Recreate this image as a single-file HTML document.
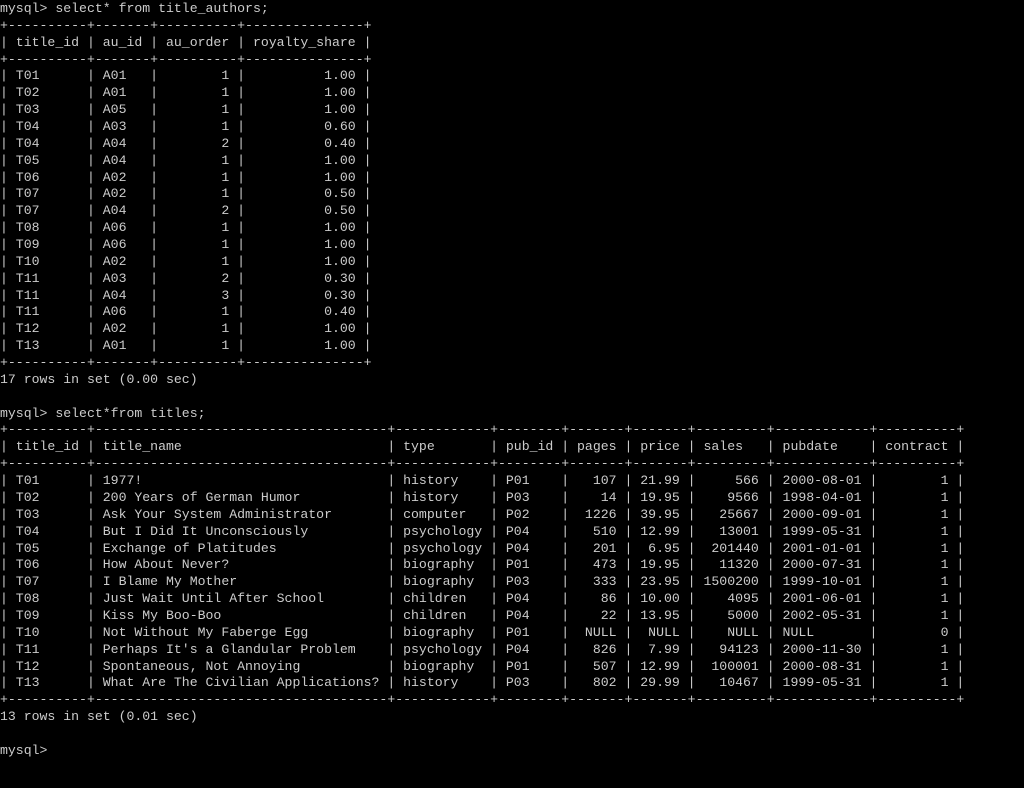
<!DOCTYPE html>
<html><head><meta charset="utf-8"><style>
html,body{margin:0;padding:0;background:#000;width:1024px;height:788px;overflow:hidden}
pre{margin:0;position:absolute;left:0;top:1px;font-family:"Liberation Mono",monospace;font-size:13.18px;line-height:16.86px;color:#cccccc;white-space:pre}
</style></head><body><pre>mysql&gt; select* from title_authors;
+----------+-------+----------+---------------+
| title_id | au_id | au_order | royalty_share |
+----------+-------+----------+---------------+
| T01      | A01   |        1 |          1.00 |
| T02      | A01   |        1 |          1.00 |
| T03      | A05   |        1 |          1.00 |
| T04      | A03   |        1 |          0.60 |
| T04      | A04   |        2 |          0.40 |
| T05      | A04   |        1 |          1.00 |
| T06      | A02   |        1 |          1.00 |
| T07      | A02   |        1 |          0.50 |
| T07      | A04   |        2 |          0.50 |
| T08      | A06   |        1 |          1.00 |
| T09      | A06   |        1 |          1.00 |
| T10      | A02   |        1 |          1.00 |
| T11      | A03   |        2 |          0.30 |
| T11      | A04   |        3 |          0.30 |
| T11      | A06   |        1 |          0.40 |
| T12      | A02   |        1 |          1.00 |
| T13      | A01   |        1 |          1.00 |
+----------+-------+----------+---------------+
17 rows in set (0.00 sec)

mysql&gt; select*from titles;
+----------+-------------------------------------+------------+--------+-------+-------+---------+------------+----------+
| title_id | title_name                          | type       | pub_id | pages | price | sales   | pubdate    | contract |
+----------+-------------------------------------+------------+--------+-------+-------+---------+------------+----------+
| T01      | 1977!                               | history    | P01    |   107 | 21.99 |     566 | 2000-08-01 |        1 |
| T02      | 200 Years of German Humor           | history    | P03    |    14 | 19.95 |    9566 | 1998-04-01 |        1 |
| T03      | Ask Your System Administrator       | computer   | P02    |  1226 | 39.95 |   25667 | 2000-09-01 |        1 |
| T04      | But I Did It Unconsciously          | psychology | P04    |   510 | 12.99 |   13001 | 1999-05-31 |        1 |
| T05      | Exchange of Platitudes              | psychology | P04    |   201 |  6.95 |  201440 | 2001-01-01 |        1 |
| T06      | How About Never?                    | biography  | P01    |   473 | 19.95 |   11320 | 2000-07-31 |        1 |
| T07      | I Blame My Mother                   | biography  | P03    |   333 | 23.95 | 1500200 | 1999-10-01 |        1 |
| T08      | Just Wait Until After School        | children   | P04    |    86 | 10.00 |    4095 | 2001-06-01 |        1 |
| T09      | Kiss My Boo-Boo                     | children   | P04    |    22 | 13.95 |    5000 | 2002-05-31 |        1 |
| T10      | Not Without My Faberge Egg          | biography  | P01    |  NULL |  NULL |    NULL | NULL       |        0 |
| T11      | Perhaps It's a Glandular Problem    | psychology | P04    |   826 |  7.99 |   94123 | 2000-11-30 |        1 |
| T12      | Spontaneous, Not Annoying           | biography  | P01    |   507 | 12.99 |  100001 | 2000-08-31 |        1 |
| T13      | What Are The Civilian Applications? | history    | P03    |   802 | 29.99 |   10467 | 1999-05-31 |        1 |
+----------+-------------------------------------+------------+--------+-------+-------+---------+------------+----------+
13 rows in set (0.01 sec)

mysql&gt;</pre></body></html>
